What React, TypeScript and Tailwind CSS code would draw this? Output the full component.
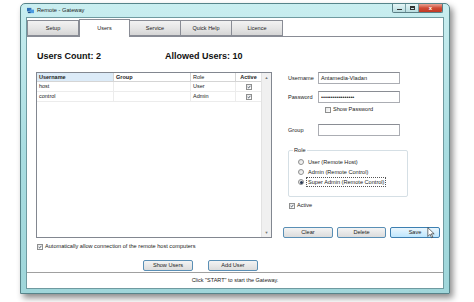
import React from "react"

const font = "font-['Liberation_Sans',Arial,sans-serif]"

const CheckBox = ({ checked, label }: { checked?: boolean; label?: string }) => (
  <div className="flex items-center gap-[2px]">
    <div className="flex h-[6px] w-[6px] items-center justify-center border border-[#8e8f8f] bg-gradient-to-br from-[#e6e6e6] to-white">
      {checked && (
        <svg viewBox="0 0 8 8" className="h-[6px] w-[6px]">
          <path d="M1.3 4.2 L3.2 6 L6.8 1.6" fill="none" stroke="#1b2b44" strokeWidth="1.4" />
        </svg>
      )}
    </div>
    {label && <span className="text-[5.6px] leading-none text-[#222]">{label}</span>}
  </div>
)

const Radio = ({ checked, label, focus }: { checked?: boolean; label: string; focus?: boolean }) => (
  <div className="flex h-[10px] items-center gap-[2px]">
    <div className="flex h-[6px] w-[6px] items-center justify-center rounded-full border border-[#8e8f8f] bg-gradient-to-br from-[#dcdcdc] to-white">
      {checked && <div className="h-[3px] w-[3px] rounded-full bg-[#2a3a55]" />}
    </div>
    <span
      className={`px-[1px] text-[5.6px] leading-[8px] text-[#222] ${focus ? "border border-dotted border-[#555]" : "border border-transparent"}`}
    >
      {label}
    </span>
  </div>
)

const Button = ({ label, width, hover }: { label: string; width: string; hover?: boolean }) => (
  <div
    className={`flex h-[11px] items-center justify-center rounded-[2px] border text-[5.6px] text-[#222] ${width} ${
      hover
        ? "border-[#3c7fb1] bg-gradient-to-b from-[#eaf6fd] to-[#bee6fd]"
        : "border-[#5a8fb5] bg-gradient-to-b from-[#f4f4f4] to-[#dcdcdc]"
    }`}
  >
    {label}
  </div>
)

const Field = ({ label, value }: { label: string; value?: string }) => (
  <div className="flex h-[12px] items-center">
    <span className="w-[35px] pl-[5px] text-[5.6px] text-[#222]">{label}</span>
    <div className="flex h-[12px] w-[82px] items-center border border-[#abadb3] border-t-[#8a8d94] bg-white px-[2px] text-[5.6px] text-[#222]">
      {value}
    </div>
  </div>
)

const tabs = ["Setup", "Users", "Service", "Quick Help", "Licence"]

const users = [
  { name: "host", group: "", role: "User", active: true },
  { name: "control", group: "", role: "Admin", active: true },
]

export default function App() {
  return (
    <div className={`relative h-[302px] w-[474px] overflow-hidden bg-white ${font}`}>
      <div className="ml-[20px] mt-[3px] flex h-[291px] w-[430px] flex-col rounded-t-[5px] border border-[#56848a] bg-gradient-to-b from-[#c9eef0] via-[#a9dde1] to-[#9fd6da] px-[5px] pb-[4px] shadow-[3px_4px_6px_rgba(0,0,0,0.45)]">
        {/* title bar */}
        <div className="flex h-[13px] items-center justify-between">
          <div className="flex items-center gap-[3px] pl-[1px]">
            <svg viewBox="0 0 8 8" className="h-[7px] w-[7px]">
              <rect x="0" y="1" width="5" height="4" fill="#2f6fb8" />
              <rect x="3" y="3" width="5" height="4" fill="#4d9be0" />
              <rect x="1" y="5.5" width="3" height="1.5" fill="#1f4f8a" />
            </svg>
            <span className="text-[5.7px] text-[#1c1c1c]">Remote - Gateway</span>
          </div>
          <div className="-mt-[4px] mr-[1px] flex h-[9px] overflow-hidden rounded-b-[2px] border border-t-0 border-[#5a7f86]">
            <div className="flex w-[13px] items-end justify-center border-r border-[#7aa0a6] bg-gradient-to-b from-[#e4f4f5] to-[#b9dde0] pb-[2px]">
              <div className="h-[1px] w-[5px] bg-[#333]" />
            </div>
            <div className="flex w-[13px] items-center justify-center border-r border-[#7aa0a6] bg-gradient-to-b from-[#e4f4f5] to-[#b9dde0]">
              <div className="h-[4px] w-[5px] border border-t-2 border-[#333]" />
            </div>
            <div className="flex w-[23px] items-center justify-center bg-gradient-to-b from-[#e8a093] via-[#cf4a34] to-[#c23a26] text-[6px] font-bold leading-none text-white">
              x
            </div>
          </div>
        </div>

        {/* client area */}
        <div className="flex flex-1 flex-col border border-[#6f9aa0] bg-white">
          <div className="flex h-[18px] items-end bg-white">
            {tabs.map((t) =>
              t === "Users" ? (
                <div
                  key={t}
                  className="relative -mb-[1px] flex h-[18px] w-[51px] items-center justify-center border border-b-0 border-[#898c95] bg-white text-[5.5px] text-[#222]"
                >
                  {t}
                </div>
              ) : (
                <div
                  key={t}
                  className="-ml-[1px] flex h-[16px] w-[52px] items-center justify-center border border-[#898c95] bg-gradient-to-b from-[#f2f2f2] via-[#e6e6e6] to-[#d6d6d6] text-[5.5px] text-[#222] first:ml-0"
                >
                  {t}
                </div>
              )
            )}
          </div>

          {/* tab panel */}
          <div className="flex flex-1 border-t border-[#898c95]">
            {/* left column */}
            <div className="flex w-[246px] flex-col pl-[9px] pt-[15px]">
              <div className="flex h-[10px] items-center text-[9px] font-bold text-[#111]">
                <span className="w-[129px] pl-[1px]">Users Count: 2</span>
                <span>Allowed Users: 10</span>
              </div>

              <div className="mt-[10px] flex h-[166px] w-[236px] border border-[#828790] bg-white">
                <div className="flex flex-1 flex-col">
                  <div className="flex h-[9px] border-b border-[#d5d5d5] text-[5.5px] font-bold text-[#222]">
                    <div className="flex w-[77px] items-center border-r border-[#d5d5d5] bg-[#dcebf8] pl-[2px]">
                      Username
                    </div>
                    <div className="flex w-[77px] items-center border-r border-[#d5d5d5] pl-[2px]">Group</div>
                    <div className="flex w-[45px] items-center border-r border-[#d5d5d5] pl-[2px] font-normal">
                      Role
                    </div>
                    <div className="flex flex-1 items-center justify-center">Active</div>
                  </div>
                  {users.map((u) => (
                    <div key={u.name} className="flex h-[10px] border-b border-[#ececec] text-[5.5px] text-[#222]">
                      <div className="flex w-[77px] items-center border-r border-[#ececec] pl-[2px]">{u.name}</div>
                      <div className="flex w-[77px] items-center border-r border-[#ececec] pl-[2px]">{u.group}</div>
                      <div className="flex w-[45px] items-center border-r border-[#ececec] pl-[2px]">{u.role}</div>
                      <div className="flex flex-1 items-center justify-center">
                        <CheckBox checked={u.active} />
                      </div>
                    </div>
                  ))}
                </div>
                {/* scrollbar */}
                <div className="flex w-[10px] flex-col justify-between border-l border-[#e2e2e2] bg-[#f0f0f0]">
                  <div className="flex h-[9px] items-center justify-center text-[4px] text-[#777]">▲</div>
                  <div className="flex h-[9px] items-center justify-center text-[4px] text-[#777]">▼</div>
                </div>
              </div>

              <div className="mt-[5px] flex h-[8px] items-center pl-[1px]">
                <CheckBox checked label="Automatically allow connection of the remote host computers" />
              </div>

              <div className="mt-[9px] flex gap-[15px] pl-[107px]">
                <Button label="Show Users" width="w-[50px]" />
                <Button label="Add User" width="w-[50px]" />
              </div>
            </div>

            {/* right column */}
            <div className="flex flex-col pl-[10px] pt-[35px]">
              <Field label="Username" value="Antamedia-Vladan" />
              <div className="mt-[7px]">
                <Field label="Password" value="•••••••••••••••••" />
              </div>
              <div className="mt-[4px] flex h-[6px] items-center pl-[42px]">
                <CheckBox label="Show Password" />
              </div>
              <div className="mt-[11px]">
                <Field label="Group" />
              </div>

              <div className="relative ml-[5px] mt-[14px] flex h-[47px] w-[120px] flex-col rounded-[2px] border border-[#d5dfe5] pl-[9px] pt-[6px]">
                <span className="absolute -top-[4px] left-[4px] bg-white px-[1px] text-[5.6px] leading-[7px] text-[#222]">
                  Role
                </span>
                <Radio label="User (Remote Host)" />
                <Radio label="Admin (Remote Control)" />
                <Radio label="Super Admin (Remote Control)" checked focus />
              </div>

              <div className="mt-[6px] flex h-[6px] items-center pl-[6px]">
                <CheckBox checked label="Active" />
              </div>

              <div className="mt-[18px] flex gap-[4px]">
                <Button label="Clear" width="w-[50px]" />
                <Button label="Delete" width="w-[49px]" />
                <Button label="Save" width="w-[50px]" hover />
              </div>
            </div>
          </div>

          {/* status bar */}
          <div className="flex h-[16px] items-center justify-center border-t border-[#a0a0a0] text-[5.5px] text-[#222]">
            Click "START" to start the Gateway.
          </div>
        </div>
      </div>

      {/* mouse cursor over Save */}
      <svg viewBox="0 0 12 19" className="absolute left-[427px] top-[227px] h-[12px] w-[8px]">
        <path d="M1 1 L1 15 L4.5 11.5 L7 17 L9 16 L6.5 10.8 L11 10.8 Z" fill="white" stroke="#222" strokeWidth="1" />
      </svg>
    </div>
  )
}
